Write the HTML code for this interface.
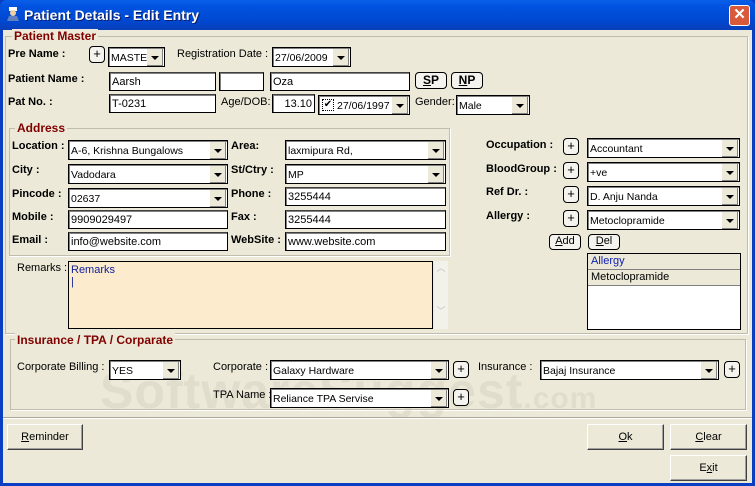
<!DOCTYPE html>
<html><head><meta charset="utf-8">
<style>
*{box-sizing:border-box;margin:0;padding:0}
body{width:755px;height:486px;overflow:hidden;background:#0a3fc4;font-family:"Liberation Sans",sans-serif;font-size:11px;color:#000;position:relative}
.a{position:absolute}
#title{left:0;top:0;width:755px;height:30px;background:linear-gradient(#0a5fe8,#0053e0 20%,#0048d0 70%,#0a3fb8);border-radius:7px 7px 0 0}
#title span{position:absolute;left:24px;top:7px;color:#fff;font-weight:bold;font-size:14px;text-shadow:1px 1px #0a1e70}
#close{left:729px;top:5px;width:21px;height:21px;background:#d9593b;border:1px solid #fff;border-radius:3px;color:#fff;font-size:15px;font-weight:bold;text-align:center;line-height:18px}
#body{left:3px;top:30px;width:749px;height:453px;background:#ece9d8}
.lb{position:absolute;font-weight:bold;font-size:11px}
.ln{position:absolute;font-size:11px}
.tb{position:absolute;background:#fff;border:1px solid #000;border-top-color:#404040;height:19px;padding:3px 2px 0;font-size:11px;white-space:nowrap;overflow:hidden;box-shadow:inset 1px 1px #808080}
.cb{position:absolute;background:#fff;border:1px solid #000;height:20px;padding:4px 18px 0 2px;font-size:10.5px;white-space:nowrap;overflow:hidden;box-shadow:inset 1px 1px #808080}
.cb::after{content:"";position:absolute;right:1px;top:1px;width:15px;height:16px;background:#ece9d8;border-right:1px solid #808080;border-bottom:1px solid #808080}
.cb i{position:absolute;right:5px;top:8px;width:0;height:0;border-left:4px solid transparent;border-right:4px solid transparent;border-top:4px solid #000;z-index:2}
.pl{position:absolute;width:16px;height:17px;border:1px solid #000;border-radius:4px;background:#f4f3ee;text-align:center;line-height:14px;font-size:13px}
.btn{position:absolute;background:#ece9d8;border:1px solid #fff;border-right-color:#404040;border-bottom-color:#404040;box-shadow:inset -1px -1px #a0a0a0;text-align:center;font-size:11px}
.rb{position:absolute;border:1px solid #000;border-radius:4px;text-align:center;font-size:12px;background:#f4f3ee}
.grp{position:absolute;border:1px solid #c0bcae;box-shadow:1px 1px #fff}
.gt{position:absolute;color:#800000;font-weight:bold;font-size:12px;background:#ece9d8;padding:0 2px}
u{text-decoration:underline}
</style></head><body>
<div id="title" class="a"><svg class="a" style="left:5px;top:6px" width="16" height="16"><rect x="4" y="1" width="8" height="4" fill="#fff"/><circle cx="8" cy="7" r="3" fill="#f0d0a0"/><path d="M2 15 L4 10 L12 10 L14 15Z" fill="#6080c0"/></svg><span>Patient Details - Edit Entry</span></div>
<div id="close" class="a">✕</div>
<div id="body" class="a"></div>

<div class="grp" style="left:5px;top:36px;width:743px;height:298px"></div>
<div class="gt" style="left:12px;top:29px">Patient Master</div>

<div class="lb" style="left:8px;top:48px">Pre Name :</div>
<div class="pl" style="left:89px;top:46px">+</div>
<div class="cb" style="left:108px;top:47px;width:57px">MASTE<i></i></div>
<div class="ln" style="left:177px;top:48px">Registration Date :</div>
<div class="cb" style="left:272px;top:47px;width:79px">27/06/2009<i></i></div>

<div class="lb" style="left:8px;top:73px">Patient Name :</div>
<div class="tb" style="left:109px;top:72px;width:107px">Aarsh</div>
<div class="tb" style="left:219px;top:72px;width:45px"></div>
<div class="tb" style="left:270px;top:72px;width:140px">Oza</div>
<div class="rb" style="left:415px;top:72px;width:32px;height:17px;font-weight:bold"><u>S</u>P</div>
<div class="rb" style="left:451px;top:72px;width:32px;height:17px;font-weight:bold"><u>N</u>P</div>

<div class="lb" style="left:8px;top:96px">Pat No. :</div>
<div class="tb" style="left:109px;top:94px;width:107px">T-0231</div>
<div class="ln" style="left:221px;top:96px">Age/DOB:</div>
<div class="tb" style="left:272px;top:94px;width:43px;text-align:right">13.10</div>
<div class="cb" style="left:318px;top:95px;width:92px;padding-left:18px">27/06/1997<i></i></div>
<div class="a" style="left:322px;top:99px;width:12px;height:12px;border:1px dotted #000;font-size:10px;line-height:10px;text-align:center">✔</div>
<div class="ln" style="left:415px;top:96px">Gender:</div>
<div class="cb" style="left:456px;top:95px;width:74px">Male<i></i></div>

<div class="grp" style="left:9px;top:128px;width:441px;height:128px"></div>
<div class="gt" style="left:15px;top:121px">Address</div>

<div class="lb" style="left:12px;top:140px">Location :</div>
<div class="cb" style="left:68px;top:140px;width:160px">A-6, Krishna Bungalows<i></i></div>
<div class="lb" style="left:231px;top:140px">Area:</div>
<div class="cb" style="left:285px;top:140px;width:161px">laxmipura Rd,<i></i></div>
<div class="lb" style="left:12px;top:164px">City :</div>
<div class="cb" style="left:68px;top:164px;width:160px">Vadodara<i></i></div>
<div class="lb" style="left:231px;top:164px">St/Ctry :</div>
<div class="cb" style="left:285px;top:164px;width:161px">MP<i></i></div>
<div class="lb" style="left:12px;top:188px">Pincode :</div>
<div class="cb" style="left:68px;top:188px;width:160px">02637<i></i></div>
<div class="lb" style="left:231px;top:188px">Phone :</div>
<div class="tb" style="left:285px;top:187px;width:161px">3255444</div>
<div class="lb" style="left:12px;top:211px">Mobile :</div>
<div class="tb" style="left:68px;top:210px;width:160px">9909029497</div>
<div class="lb" style="left:231px;top:211px">Fax :</div>
<div class="tb" style="left:285px;top:210px;width:161px">3255444</div>
<div class="lb" style="left:12px;top:234px">Email :</div>
<div class="tb" style="left:68px;top:232px;width:160px">info@website.com</div>
<div class="lb" style="left:231px;top:234px">WebSite :</div>
<div class="tb" style="left:285px;top:232px;width:161px">www.website.com</div>

<div class="ln" style="left:17px;top:262px">Remarks :</div>
<div class="a" style="left:68px;top:261px;width:365px;height:68px;background:#fcebcc;border:1px solid #000;color:#1020a0;padding:2px 2px">Remarks<br>|</div>
<div class="a" style="left:434px;top:261px;width:14px;height:68px;background:#f2f1ea;color:#c0c0c0;font-size:9px;text-align:center">︿<br><br><br><br>﹀</div>

<div class="lb" style="left:486px;top:139px">Occupation :</div>
<div class="pl" style="left:563px;top:138px">+</div>
<div class="cb" style="left:587px;top:138px;width:153px">Accountant<i></i></div>
<div class="lb" style="left:486px;top:163px">BloodGroup :</div>
<div class="pl" style="left:563px;top:162px">+</div>
<div class="cb" style="left:587px;top:162px;width:153px">+ve<i></i></div>
<div class="lb" style="left:486px;top:186px">Ref Dr. :</div>
<div class="pl" style="left:563px;top:186px">+</div>
<div class="cb" style="left:587px;top:186px;width:153px">D. Anju Nanda<i></i></div>
<div class="lb" style="left:486px;top:210px">Allergy :</div>
<div class="pl" style="left:563px;top:210px">+</div>
<div class="cb" style="left:587px;top:210px;width:153px">Metoclopramide<i></i></div>
<div class="rb" style="left:549px;top:234px;width:32px;height:16px;font-size:11px"><u>A</u>dd</div>
<div class="rb" style="left:588px;top:234px;width:32px;height:16px;font-size:11px"><u>D</u>el</div>
<div class="a" style="left:587px;top:253px;width:154px;height:77px;background:#fff;border:1px solid #000"></div>
<div class="a" style="left:588px;top:254px;width:152px;height:16px;background:#ece9d8;color:#1020b0;padding:1px 3px;border-bottom:1px solid #808080">Allergy</div>
<div class="a" style="left:588px;top:270px;width:152px;height:16px;background:#ece9d8;padding:1px 3px;border-bottom:1px solid #808080">Metoclopramide</div>

<div class="grp" style="left:10px;top:339px;width:736px;height:71px"></div>
<div class="gt" style="left:15px;top:333px">Insurance / TPA / Corparate</div>
<div class="a" style="left:100px;top:362px;font-size:50px;font-weight:bold;color:rgba(200,195,180,0.3);letter-spacing:1px">SoftwareSuggest<span style="font-size:30px">.com</span></div>
<div class="ln" style="left:17px;top:361px">Corporate Billing :</div>
<div class="cb" style="left:109px;top:360px;width:72px">YES<i></i></div>
<div class="ln" style="left:213px;top:361px">Corporate :</div>
<div class="cb" style="left:270px;top:360px;width:179px">Galaxy Hardware<i></i></div>
<div class="pl" style="left:453px;top:361px">+</div>
<div class="ln" style="left:478px;top:361px">Insurance :</div>
<div class="cb" style="left:540px;top:360px;width:179px">Bajaj Insurance<i></i></div>
<div class="pl" style="left:724px;top:361px">+</div>
<div class="ln" style="left:213px;top:389px">TPA Name :</div>
<div class="cb" style="left:270px;top:388px;width:179px">Reliance TPA Servise<i></i></div>
<div class="pl" style="left:453px;top:389px">+</div>

<div class="a" style="left:3px;top:417px;width:749px;height:2px;border-top:1px solid #aca899;border-bottom:1px solid #fff"></div>
<div class="btn" style="left:7px;top:424px;width:76px;height:26px;line-height:24px"><u>R</u>eminder</div>
<div class="btn" style="left:587px;top:424px;width:77px;height:26px;line-height:24px"><u>O</u>k</div>
<div class="btn" style="left:670px;top:424px;width:77px;height:26px;line-height:24px"><u>C</u>lear</div>
<div class="btn" style="left:670px;top:455px;width:77px;height:26px;line-height:24px">E<u>x</u>it</div>
</body></html>
